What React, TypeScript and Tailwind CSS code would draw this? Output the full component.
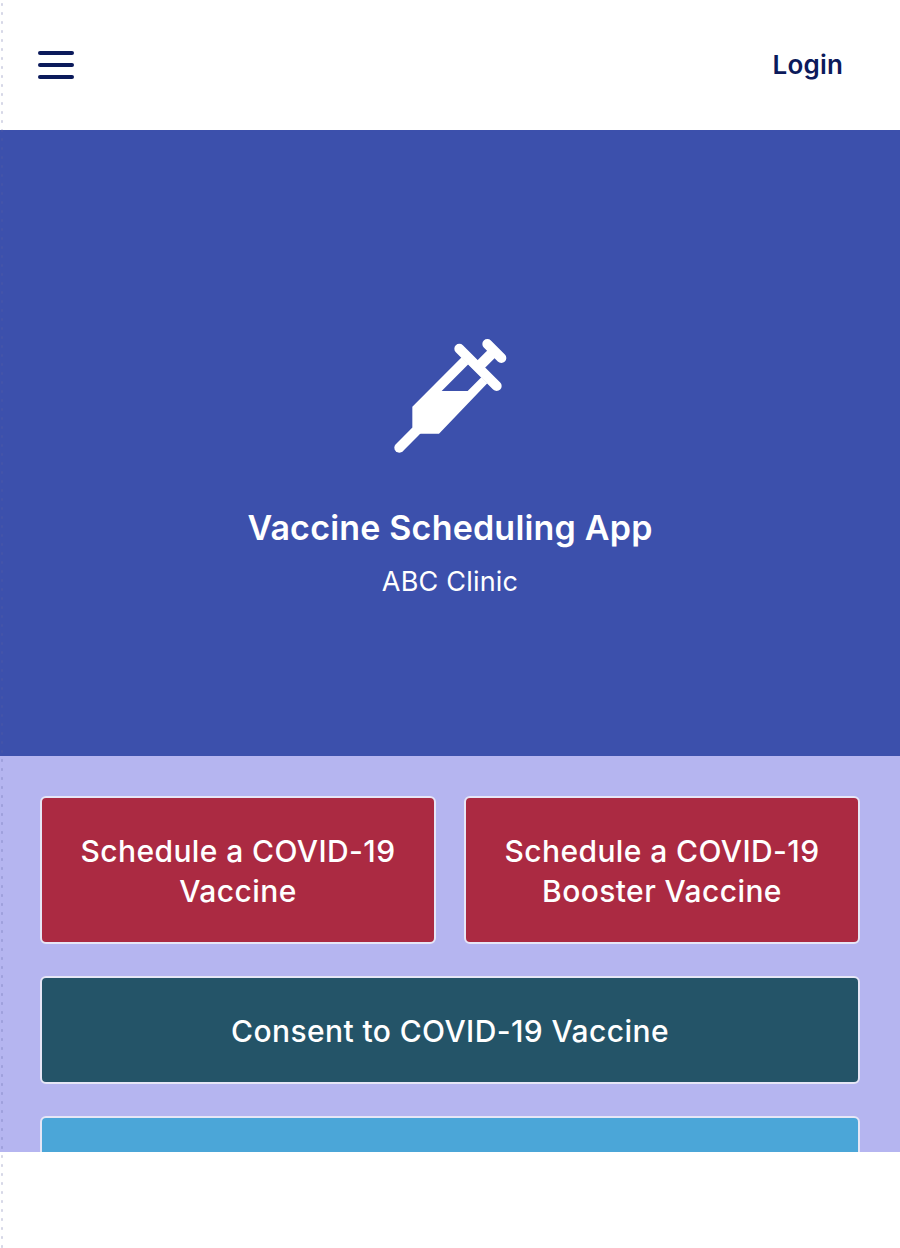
export default function App() {
  return (
    <div className="relative w-[900px] h-[1248px] bg-white font-['Inter',sans-serif]">
      {/* speckled edge along the left of the capture */}
      <div className="absolute left-0 top-0 h-full w-[4px] bg-[radial-gradient(#5a5f9e_0.6px,transparent_1px)] bg-[length:4px_9px] opacity-25" />

      <header className="h-[130px] flex items-center justify-between pl-[38px] pr-[57px]">
        <button className="flex flex-col gap-2 w-9">
          <span className="block h-1 rounded-full bg-[#0b1a5b]" />
          <span className="block h-1 rounded-full bg-[#0b1a5b]" />
          <span className="block h-1 rounded-full bg-[#0b1a5b]" />
        </button>
        <a className="-mt-[2px] text-[26px] font-semibold text-[#0b1a5b] tracking-[0.2px]">Login</a>
      </header>

      <section className="h-[626px] bg-[#3c50ac] flex flex-col items-center pt-[190px] text-white">
        <svg width="160" height="150" viewBox="0 0 480 450">
          <path
            fillRule="evenodd"
            fill="#fff"
            d="M127 260 L275 112 L352 190 L207 341 L147 341 L127 322 Z M215 213 L293 213 L334 172 L295 133 Z"
          />
          <path stroke="#fff" strokeLinecap="round" fill="none" d="M88 383 L140 331" strokeWidth="30" />
          <path stroke="#fff" strokeLinecap="round" fill="none" d="M268 86 L380 198 M352 72 L394 114" strokeWidth="30" />
          <path stroke="#fff" fill="none" d="M324 142 L373 93" strokeWidth="32" />
        </svg>
        <h1 className="mt-[35px] text-[34px] leading-[46px] font-semibold tracking-[0.2px]">Vaccine Scheduling App</h1>
        <p className="mt-[13px] text-[27px] leading-[36px] tracking-[0.2px]">ABC Clinic</p>
      </section>

      <section className="h-[396px] overflow-hidden bg-[#b5b5f0] px-10 pt-10">
        <div className="grid grid-cols-2 gap-[28px]">
          <button className="h-[148px] rounded-md border-2 border-[#e6e6f6] bg-[#ab2a42] px-8 pt-[2px] text-[30px] leading-[40px] font-medium tracking-[0.4px] text-white">
            Schedule a COVID-19 Vaccine
          </button>
          <button className="h-[148px] rounded-md border-2 border-[#e6e6f6] bg-[#ab2a42] px-8 pt-[2px] text-[30px] leading-[40px] font-medium tracking-[0.4px] text-white">
            Schedule a COVID-19 Booster Vaccine
          </button>
        </div>
        <button className="mt-8 block h-[108px] w-full rounded-md border-2 border-[#e6e6f6] bg-[#245468] pt-[2px] text-[30px] font-medium tracking-[0.4px] text-white">
          Consent to COVID-19 Vaccine
        </button>
        <div className="mt-8 h-[108px] rounded-md border-2 border-[#e6e6f6] bg-[#4ba6d8]" />
      </section>
    </div>
  )
}
